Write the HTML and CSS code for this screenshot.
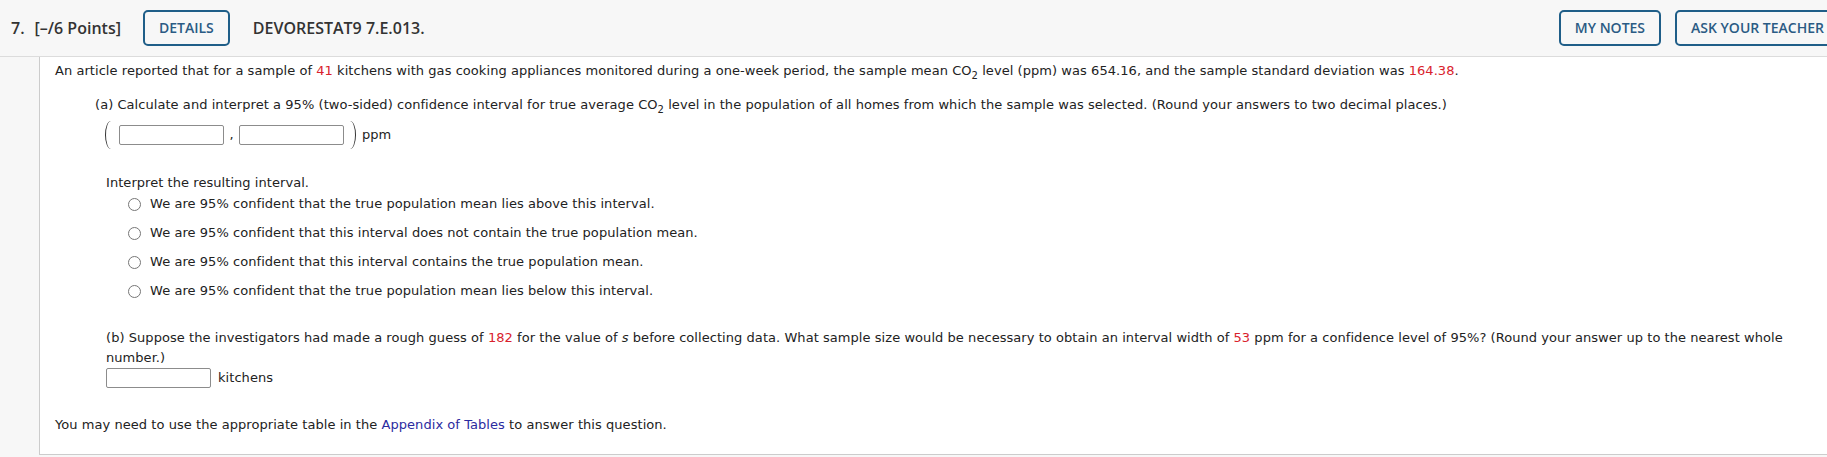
FILE: index.html
```html
<!DOCTYPE html>
<html lang="en">
<head>
    <meta charset="UTF-8">
    <meta name="viewport" content="width=device-width, initial-scale=1.0">
    <title>DEVORESTAT9 7.E.013.</title>
    <link rel="stylesheet" href="styles.css">
</head>
<body>
<div class="page">
    <div class="header">
        <div class="title"><span class="num">7.</span>[–/6 Points]</div>
        <button class="btn details">DETAILS</button>
        <div class="code">DEVORESTAT9 7.E.013.</div>
        <button class="btn notes">MY NOTES</button>
        <button class="btn ask">ASK YOUR TEACHER</button>
    </div>

    <div class="question">
        <p class="intro">An article reported that for a sample of <span class="red">41</span> kitchens with gas cooking appliances monitored during a one-week period, the sample mean CO<sub>2</sub> level (ppm) was 654.16, and the sample standard deviation was <span class="red">164.38</span>.</p>

        <div class="part part-a">
            <p class="lead">(a) Calculate and interpret a 95% (two-sided) confidence interval for true average CO<sub>2</sub> level in the population of all homes from which the sample was selected. (Round your answers to two decimal places.)</p>
            <div class="interval">
                <span class="paren paren-l"></span>
                <input type="text" class="answer first">
                <span class="comma">,</span>
                <input type="text" class="answer">
                <span class="paren paren-r"></span>
                <span class="unit">ppm</span>
            </div>
            <p class="interpret">Interpret the resulting interval.</p>
            <ul class="choices">
                <li><input type="radio" name="interp"><span>We are 95% confident that the true population mean lies above this interval.</span></li>
                <li><input type="radio" name="interp"><span>We are 95% confident that this interval does not contain the true population mean.</span></li>
                <li><input type="radio" name="interp"><span>We are 95% confident that this interval contains the true population mean.</span></li>
                <li><input type="radio" name="interp"><span>We are 95% confident that the true population mean lies below this interval.</span></li>
            </ul>
        </div>

        <div class="part part-b">
            <p>(b) Suppose the investigators had made a rough guess of <span class="red">182</span> for the value of <i>s</i> before collecting data. What sample size would be necessary to obtain an interval width of <span class="red">53</span> ppm for a confidence level of 95%? (Round your answer up to the nearest whole number.)</p>
            <div class="size-row">
                <input type="text" class="answer">
                <span class="unit">kitchens</span>
            </div>
        </div>

        <p class="appendix">You may need to use the appropriate table in the <a href="#">Appendix of Tables</a> to answer this question.</p>
    </div>
</div>
</body>
</html>
```

FILE: styles.css
```css
html, body {
    overflow: hidden;
}
body {
    margin: 0;
    background-color: #f7f7f7;
    font-family: "DejaVu Sans", Verdana, sans-serif;
    font-size: 13px;
    color: #222;
}
.page {
    width: 1850px;
}

/* header bar */
.header {
    display: flex;
    align-items: center;
    height: 57px;
    box-sizing: border-box;
    padding: 0 10px 0 11px;
    border-bottom: 1px solid #dcdcdc;
    font-family: "Open Sans", sans-serif;
    color: #333;
}
.title, .code {
    font-size: 16px;
    font-weight: 600;
}
.num {
    margin-right: 10px;
}
.code {
    margin-left: 23px;
}
.btn {
    font-family: "Open Sans", sans-serif;
    font-size: 14px;
    font-weight: 600;
    line-height: 18px;
    color: #2b5b84;
    background-color: transparent;
    border: 2px solid #1f5e88;
    border-radius: 5px;
    padding: 7px 14px;
    cursor: pointer;
}
.details {
    margin-left: 22px;
}
.notes {
    margin-left: auto;
}
.ask {
    margin-left: 14px;
}

/* question body */
.question {
    margin-left: 39px;
    background-color: #fff;
    border-left: 1px solid #ccc;
    border-bottom: 1px solid #ccc;
    padding: 4px 50px 19px 15px;
    line-height: 20px;
    letter-spacing: 0.055px;
}
.question p {
    margin: 0;
}
sub {
    font-size: 10px;
    line-height: 0;
    vertical-align: -4px;
}
.red {
    color: #d9222c;
}
a {
    color: #2b2ba0;
    text-decoration: none;
}
.part {
    margin-left: 51px;
}
.question .lead {
    margin-left: -11px;
}
.part-a {
    margin-top: 14px;
}
.part-b {
    margin-top: 27px;
}

.answer {
    width: 105px;
    height: 20px;
    box-sizing: border-box;
    border: 1px solid #8c8c8c;
    border-radius: 2px;
    padding: 0 3px;
    margin: 0;
    font-family: inherit;
    font-size: 13px;
}
.interval {
    display: flex;
    align-items: center;
    height: 30px;
    margin-top: 5px;
}
.paren {
    width: 6px;
    height: 28px;
    box-sizing: border-box;
}
.paren-l {
    margin-left: -1px;
    margin-right: 8px;
    border-left: 1.5px solid #333;
    border-radius: 100% 0 0 100% / 50% 0 0 50%;
}
.paren-r {
    margin-left: 6px;
    border-right: 1.5px solid #333;
    border-radius: 0 100% 100% 0 / 0 50% 50% 0;
}
.comma {
    width: 15px;
    text-align: center;
}
.unit {
    margin-left: 6px;
}

.question .interpret {
    margin-top: 23px;
}
.choices {
    list-style: none;
    margin: 0;
    padding: 0;
}
.choices li {
    display: flex;
    align-items: center;
    height: 20px;
    margin-top: 9px;
}
.choices li:first-child {
    margin-top: 1px;
}
.choices input {
    width: 13px;
    height: 13px;
    margin: 0 9px 0 22px;
}

.size-row {
    display: flex;
    align-items: center;
    height: 20px;
}
.size-row .unit {
    margin-left: 7px;
}
.question .appendix {
    margin-top: 27px;
}
```
